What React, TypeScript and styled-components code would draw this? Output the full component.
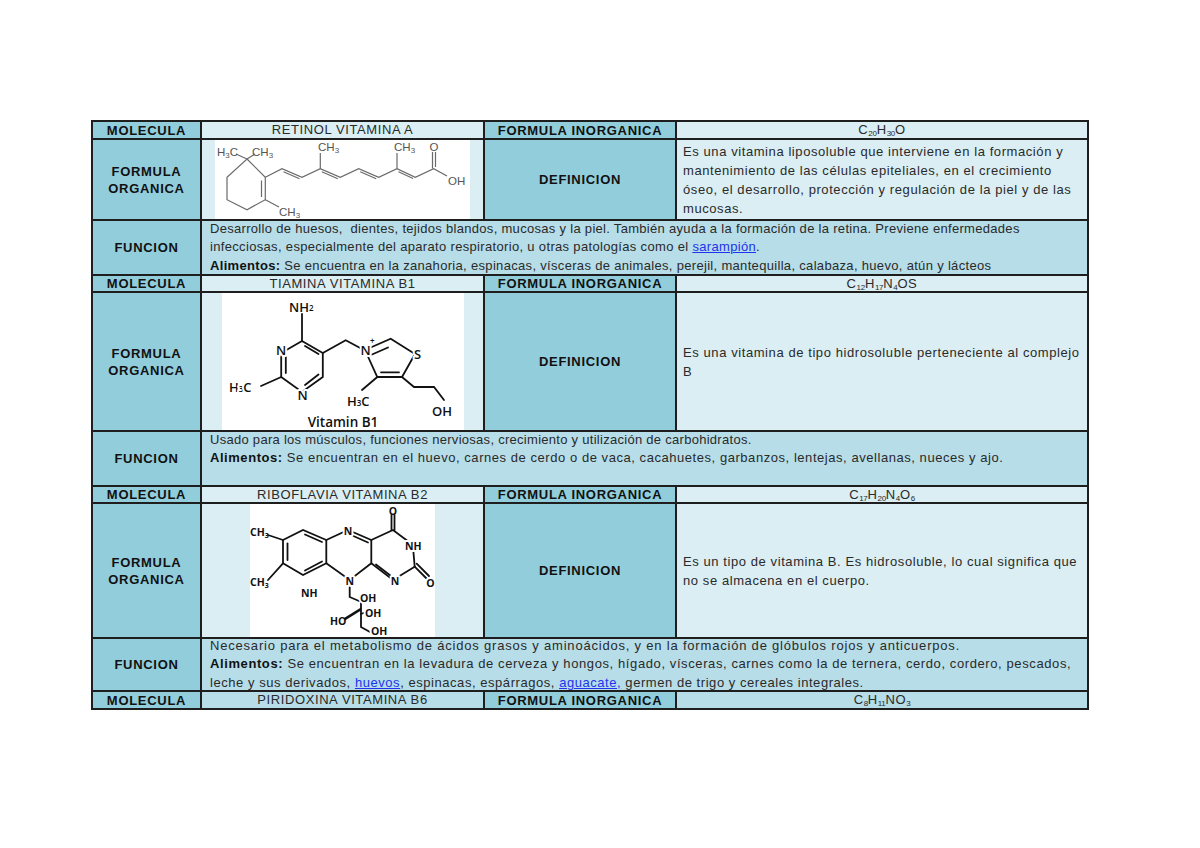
import React from "react";
import styled, { createGlobalStyle } from "styled-components";

const Global = createGlobalStyle`
  html, body { margin: 0; padding: 0; background: #ffffff; }
  body { font-family: "Liberation Sans", Arial, sans-serif; }
`;

const Page = styled.div`
  width: 1200px;
  min-height: 848px;
  box-sizing: border-box;
  padding: 120px 0 0 91px;
  background: #fff;
`;

const Sheet = styled.div`
  display: grid;
  grid-template-columns: 107px 281px 190px 410px;
  grid-template-rows: 16px 79px 53px 15px 137px 53px 15px 133px 51px 16px;
  gap: 2px;
  padding: 2px;
  background: #1e1e1e;
  width: max-content;
`;

const Label = styled.div`
  background: #92cddc;
  color: #111;
  font-weight: 700;
  font-size: 13px;
  letter-spacing: 0.7px;
  line-height: 17px;
  display: flex;
  align-items: center;
  justify-content: center;
  text-align: center;
  white-space: nowrap;
`;

const Value = styled.div<{ $tone: "light" | "mid" }>`
  background: ${(p) => (p.$tone === "light" ? "#daeef3" : "#b6dde8")};
  color: #2a2a2a;
  font-size: 13px;
  letter-spacing: 0.6px;
  line-height: 16px;
  display: flex;
  align-items: center;
  justify-content: center;
  white-space: nowrap;
`;

const Sub = styled.sub`
  font-size: 8px;
  line-height: 0;
  vertical-align: -2px;
  letter-spacing: -0.3px;
`;

const FigureCell = styled.div`
  background: #daeef3;
  display: flex;
  justify-content: center;
  align-items: stretch;
  overflow: hidden;
`;

const FigureBox = styled.div<{ $w: number }>`
  width: ${(p) => p.$w}px;
  background: #ffffff;
  display: flex;
  svg { display: block; }
`;

const Prose = styled.div`
  background: #daeef3;
  color: #2a2a2a;
  font-size: 13px;
  letter-spacing: 0.58px;
  line-height: 19px;
  padding-left: 6px;
  display: flex;
  flex-direction: column;
  justify-content: center;
`;

const FunctionBody = styled.div`
  grid-column: span 3;
  background: #b6dde8;
  color: #2a2a2a;
  font-size: 13px;
  line-height: 18.5px;
  padding-left: 8px;
  display: flex;
  flex-direction: column;
  justify-content: center;
  overflow: visible;
`;

const Line = styled.span<{ $ls?: number }>`
  display: block;
  white-space: nowrap;
  ${(p) => (p.$ls !== undefined ? `letter-spacing: ${p.$ls}px;` : "")}
`;

const Strong = styled.b`
  color: #111;
  font-weight: 700;
`;

const Link = styled.a`
  color: #2233ee;
  text-decoration: underline;
`;

const Formula: React.FC<{ parts: [string, string?][] }> = ({ parts }) => (
  <span>
    {parts.map(([el, n], i) => (
      <React.Fragment key={i}>
        {el}
        {n ? <Sub>{n}</Sub> : null}
      </React.Fragment>
    ))}
  </span>
);

const halo = {
  paintOrder: "stroke" as const,
  stroke: "#fff",
  strokeWidth: 4,
  strokeLinejoin: "round" as const,
};

const Retinol = () => (
  <svg width="255" height="79" viewBox="0 0 255 79">
    <g stroke="#6a6a6a" strokeWidth="1.2" fill="none">
      <polygon points="32,19 50.3,37.3 50.3,59.7 32,69.7 12,59.7 12,37.3" />
      <line x1="46.5" y1="40.5" x2="46.5" y2="57" />
      <line x1="32" y1="19" x2="21" y2="14" />
      <line x1="32" y1="19" x2="40" y2="14" />
      <line x1="50.3" y1="59.7" x2="64" y2="67" />
      <polyline points="50.3,37.3 67,28.7 87,37.3 105.3,28.7 125.3,37.3 143.7,28.7 163.7,37.3 182,28.7 200.3,37.3 218.7,28.7 232,36" />
      <line x1="68.5" y1="31.8" x2="84.5" y2="38.7" />
      <line x1="106.8" y1="31.8" x2="122.8" y2="38.7" />
      <line x1="145.2" y1="31.8" x2="161.2" y2="38.7" />
      <line x1="183.5" y1="31.8" x2="198" y2="38.5" />
      <line x1="105.3" y1="28.7" x2="105.3" y2="13" />
      <line x1="182" y1="28.7" x2="182" y2="13" />
      <line x1="217.5" y1="28.5" x2="217.5" y2="12" />
      <line x1="220.5" y1="27" x2="220.5" y2="12" />
    </g>
    <g fill="#555" fontFamily="Liberation Sans, Arial, sans-serif" fontSize="11.5">
      <text x="2" y="15.5">H<tspan fontSize="8" dy="2">3</tspan><tspan dy="-2">C</tspan></text>
      <text x="37" y="15.5">CH<tspan fontSize="8" dy="2">3</tspan></text>
      <text x="103" y="10.5">CH<tspan fontSize="8" dy="2">3</tspan></text>
      <text x="179" y="10.5">CH<tspan fontSize="8" dy="2">3</tspan></text>
      <text x="214.5" y="10.5">O</text>
      <text x="233" y="44.5">OH</text>
      <text x="64" y="75.5">CH<tspan fontSize="8" dy="2">3</tspan></text>
    </g>
  </svg>
);

const Thiamine = () => (
  <svg width="242" height="137" viewBox="0 2 242 137">
    <g stroke="#111" strokeWidth="1.8" fill="none" strokeLinecap="round">
      <line x1="80" y1="23" x2="80" y2="50" />
      <polyline points="59.2,62 80,50 100.8,62 100.8,86 80,101 59.2,86 59.2,62" />
      <line x1="63.8" y1="66" x2="63.8" y2="82" />
      <line x1="83" y1="55" x2="96.5" y2="63" />
      <line x1="96.5" y1="83.5" x2="83" y2="94" />
      <line x1="59.2" y1="86" x2="39" y2="95" />
      <polyline points="100.8,62 123.7,49.3 141,58.5" />
      <polyline points="143,59 168.7,47.7 193,63 180,86 155.3,86 143,59" />
      <line x1="150" y1="63.5" x2="166" y2="56.5" />
      <line x1="159" y1="81.3" x2="177" y2="81.3" />
      <line x1="155.3" y1="86" x2="140" y2="99" />
      <polyline points="180,86 192,96 212,96 222,109" />
    </g>
    <g fill="#111" fontFamily="Open Sans, Liberation Sans, Arial, sans-serif" fontWeight="600" fontSize="13">
      <text x="67" y="21">NH<tspan fontSize="8" dy="-1">2</tspan></text>
      <text x="59" y="63.5" textAnchor="middle" style={halo}>N</text>
      <text x="80.5" y="108.5" textAnchor="middle" style={halo}>N</text>
      <text x="143.5" y="64" textAnchor="middle" style={halo}>N</text>
      <text x="148" y="53" fontSize="8">+</text>
      <text x="195.5" y="67.5" textAnchor="middle" style={halo}>S</text>
      <text x="7" y="101" style={halo}>H<tspan fontSize="8">3</tspan>C</text>
      <text x="125" y="114.5">H<tspan fontSize="8">3</tspan>C</text>
      <text x="210" y="124.5" style={halo}>OH</text>
      <text x="121" y="136" textAnchor="middle" fontSize="13.5">Vitamin B1</text>
    </g>
  </svg>
);

const Riboflavin = () => (
  <svg width="185" height="133" viewBox="0 2 185 133">
    <g stroke="#111" strokeWidth="1.8" fill="none" strokeLinecap="round">
      <polygon points="33,38 53,28 76.3,38 76.3,61.3 53,73 33,61.3" />
      <line x1="37.5" y1="41.5" x2="37.5" y2="58" />
      <line x1="55" y1="32.5" x2="72" y2="40" />
      <line x1="72" y1="59.5" x2="55" y2="68.5" />
      <line x1="18" y1="33" x2="33" y2="38" />
      <line x1="18" y1="78" x2="33" y2="61.3" />
      <polyline points="76.3,38 98,28 121.3,38 121.3,61.3 99.7,78 76.3,61.3" />
      <line x1="100" y1="32.5" x2="118" y2="40.5" />
      <polyline points="121.3,38 143,28 163,43" />
      <polyline points="164.7,64.7 143,78 121.3,61.3" />
      <line x1="126" y1="62.5" x2="141" y2="74" />
      <line x1="164.7" y1="64.7" x2="163" y2="45" />
      <line x1="164.7" y1="64.7" x2="177" y2="77" />
      <line x1="166.7" y1="61.7" x2="179" y2="74" />
      <line x1="141.5" y1="28" x2="141.5" y2="13" />
      <line x1="144.5" y1="28" x2="144.5" y2="13" />
      <polyline points="99.7,78 99.7,95 109,99" />
      <polyline points="111,99 111,125 120,130" />
      <line x1="111" y1="112" x2="116" y2="110" />
    </g>
    <polygon points="111,105.5 111,108.5 95,118.5 94,116" fill="#111" />
    <g fill="#111" fontFamily="Open Sans, Liberation Sans, Arial, sans-serif" fontWeight="700" fontSize="10.5">
      <text x="0" y="34">CH<tspan fontSize="7" dy="2">3</tspan></text>
      <text x="0" y="84">CH<tspan fontSize="7" dy="2">3</tspan></text>
      <text x="98" y="33" textAnchor="middle" style={halo}>N</text>
      <text x="99.7" y="82.5" textAnchor="middle" style={halo}>N</text>
      <text x="145" y="82.5" textAnchor="middle" style={halo}>N</text>
      <text x="143" y="13" textAnchor="middle">O</text>
      <text x="155" y="48" style={halo}>NH</text>
      <text x="180.5" y="84.5" textAnchor="middle" style={halo}>O</text>
      <text x="51" y="95">NH</text>
      <text x="110" y="100" style={halo}>OH</text>
      <text x="80" y="123">HO</text>
      <text x="115" y="115" style={halo}>OH</text>
      <text x="121" y="133" style={halo}>OH</text>
    </g>
  </svg>
);

const OrganicLabel = () => (
  <Label>
    FORMULA
    <br />
    ORGANICA
  </Label>
);

export default function App() {
  return (
    <Page>
      <Global />
      <Sheet>
        {/* Vitamina A */}
        <Label>MOLECULA</Label>
        <Value $tone="light">RETINOL VITAMINA A</Value>
        <Label>FORMULA INORGANICA</Label>
        <Value $tone="light">
          <Formula parts={[["C", "20"], ["H", "30"], ["O"]]} />
        </Value>

        <OrganicLabel />
        <FigureCell>
          <FigureBox $w={255}>
            <Retinol />
          </FigureBox>
        </FigureCell>
        <Label>DEFINICION</Label>
        <Prose>
          <Line>Es una vitamina liposoluble que interviene en la formación y</Line>
          <Line>mantenimiento de las células epiteliales, en el crecimiento</Line>
          <Line>óseo, el desarrollo, protección y regulación de la piel y de las</Line>
          <Line>mucosas.</Line>
        </Prose>

        <Label>FUNCION</Label>
        <FunctionBody>
          <Line $ls={0.3}>
            Desarrollo de huesos,&nbsp; dientes, tejidos blandos, mucosas y la piel. También ayuda a la formación de la
            retina. Previene enfermedades
          </Line>
          <Line $ls={0.33}>
            infecciosas, especialmente del aparato respiratorio, u otras patologías como el{" "}
            <Link href="#">sarampión</Link>.
          </Line>
          <Line $ls={0.32}>
            <Strong>Alimentos:</Strong> Se encuentra en la zanahoria, espinacas, vísceras de animales, perejil,
            mantequilla, calabaza, huevo, atún y lácteos
          </Line>
        </FunctionBody>

        {/* Vitamina B1 */}
        <Label>MOLECULA</Label>
        <Value $tone="light">TIAMINA VITAMINA B1</Value>
        <Label>FORMULA INORGANICA</Label>
        <Value $tone="light">
          <Formula parts={[["C", "12"], ["H", "17"], ["N", "4"], ["OS"]]} />
        </Value>

        <OrganicLabel />
        <FigureCell>
          <FigureBox $w={242}>
            <Thiamine />
          </FigureBox>
        </FigureCell>
        <Label>DEFINICION</Label>
        <Prose>
          <Line>Es una vitamina de tipo hidrosoluble perteneciente al complejo</Line>
          <Line>B</Line>
        </Prose>

        <Label>FUNCION</Label>
        <FunctionBody>
          <Line $ls={0.28}>
            Usado para los músculos, funciones nerviosas, crecimiento y utilización de carbohidratos.
          </Line>
          <Line $ls={0.55}>
            <Strong>Alimentos:</Strong> Se encuentran en el huevo, carnes de cerdo o de vaca, cacahuetes, garbanzos,
            lentejas, avellanas, nueces y ajo.
          </Line>
          <Line>&nbsp;</Line>
        </FunctionBody>

        {/* Vitamina B2 */}
        <Label>MOLECULA</Label>
        <Value $tone="light">RIBOFLAVIA VITAMINA B2</Value>
        <Label>FORMULA INORGANICA</Label>
        <Value $tone="light">
          <Formula parts={[["C", "17"], ["H", "20"], ["N", "4"], ["O", "6"]]} />
        </Value>

        <OrganicLabel />
        <FigureCell>
          <FigureBox $w={185}>
            <Riboflavin />
          </FigureBox>
        </FigureCell>
        <Label>DEFINICION</Label>
        <Prose>
          <Line>Es un tipo de vitamina B. Es hidrosoluble, lo cual significa que</Line>
          <Line>no se almacena en el cuerpo.</Line>
        </Prose>

        <Label>FUNCION</Label>
        <FunctionBody>
          <Line $ls={0.8}>
            Necesario para el metabolismo de ácidos grasos y aminoácidos, y en la formación de glóbulos rojos y
            anticuerpos.
          </Line>
          <Line $ls={0.6}>
            <Strong>Alimentos:</Strong> Se encuentran en la levadura de cerveza y hongos, hígado, vísceras, carnes
            como la de ternera, cerdo, cordero, pescados,
          </Line>
          <Line $ls={0.55}>
            leche y sus derivados, <Link href="#">huevos</Link>, espinacas, espárragos, <Link href="#">aguacate,</Link>{" "}
            germen de trigo y cereales integrales.
          </Line>
        </FunctionBody>

        {/* Vitamina B6 */}
        <Label>MOLECULA</Label>
        <Value $tone="mid">PIRIDOXINA VITAMINA B6</Value>
        <Label>FORMULA INORGANICA</Label>
        <Value $tone="mid">
          <Formula parts={[["C", "8"], ["H", "11"], ["NO", "3"]]} />
        </Value>
      </Sheet>
    </Page>
  );
}
